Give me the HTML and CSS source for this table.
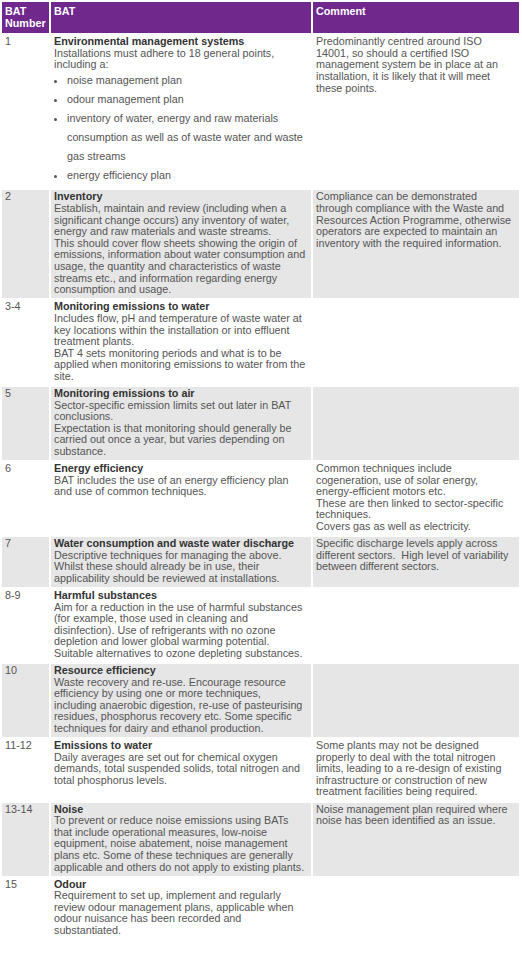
FILE: index.html
```html
<!DOCTYPE html>
<html lang="en">
<head>
<meta charset="utf-8">
<title>BAT conclusions</title>
<link rel="stylesheet" href="styles.css">
</head>
<body>
<table class="bat-table">
  <colgroup>
    <col class="col-num">
    <col class="col-bat">
    <col class="col-comment">
  </colgroup>
  <thead>
    <tr>
      <th>BAT Number</th>
      <th>BAT</th>
      <th>Comment</th>
    </tr>
  </thead>
  <tbody>
    <tr>
      <td>1</td>
      <td class="bat">
        <strong class="title">Environmental management systems</strong><br>
        Installations must adhere to 18 general points, including a:
        <ul class="points">
          <li>noise management plan</li>
          <li>odour management plan</li>
          <li>inventory of water, energy and raw materials consumption as well as of waste water and waste gas streams</li>
          <li>energy efficiency plan</li>
        </ul>
      </td>
      <td class="comment">Predominantly centred around ISO 14001, so should a certified ISO management system be in place at an installation, it is likely that it will meet these points.</td>
    </tr>
    <tr class="alt">
      <td>2</td>
      <td class="bat">
        <strong class="title">Inventory</strong><br>
        Establish, maintain and review (including when a significant change occurs) any inventory of water, energy and raw materials and waste streams.<br>
        This should cover flow sheets showing the origin of emissions, information about water consumption and usage, the quantity and characteristics of waste streams etc., and information regarding energy consumption and usage.
      </td>
      <td class="comment">Compliance can be demonstrated through compliance with the Waste and Resources Action Programme, otherwise operators are expected to maintain an inventory with the required information.</td>
    </tr>
    <tr>
      <td>3-4</td>
      <td class="bat">
        <strong class="title">Monitoring emissions to water</strong><br>
        Includes flow, pH and temperature of waste water at key locations within the installation or into effluent treatment plants.<br>
        BAT 4 sets monitoring periods and what is to be applied when monitoring emissions to water from the site.
      </td>
      <td class="comment"></td>
    </tr>
    <tr class="alt">
      <td>5</td>
      <td class="bat">
        <strong class="title">Monitoring emissions to air</strong><br>
        Sector-specific emission limits set out later in BAT conclusions.<br>
        Expectation is that monitoring should generally be carried out once a year, but varies depending on substance.
      </td>
      <td class="comment"></td>
    </tr>
    <tr>
      <td>6</td>
      <td class="bat">
        <strong class="title">Energy efficiency</strong><br>
        BAT includes the use of an energy efficiency plan and use of common techniques.
      </td>
      <td class="comment">Common techniques include cogeneration, use of solar energy, energy-efficient motors etc.<br>
        These are then linked to sector-specific techniques.<br>
        Covers gas as well as electricity.</td>
    </tr>
    <tr class="alt">
      <td>7</td>
      <td class="bat">
        <strong class="title">Water consumption and waste water discharge</strong><br>
        Descriptive techniques for managing the above. Whilst these should already be in use, their applicability should be reviewed at installations.
      </td>
      <td class="comment">Specific discharge levels apply across different sectors.&nbsp; High level of variability between different sectors.</td>
    </tr>
    <tr>
      <td>8-9</td>
      <td class="bat">
        <strong class="title">Harmful substances</strong><br>
        Aim for a reduction in the use of harmful substances (for example, those used in cleaning and disinfection). Use of refrigerants with no ozone depletion and lower global warming potential.<br>
        Suitable alternatives to ozone depleting substances.
      </td>
      <td class="comment"></td>
    </tr>
    <tr class="alt">
      <td>10</td>
      <td class="bat">
        <strong class="title">Resource efficiency</strong><br>
        Waste recovery and re-use. Encourage resource efficiency by using one or more techniques, including anaerobic digestion, re-use of pasteurising residues, phosphorus recovery etc. Some specific techniques for dairy and ethanol production.
      </td>
      <td class="comment"></td>
    </tr>
    <tr>
      <td>11-12</td>
      <td class="bat">
        <strong class="title">Emissions to water</strong><br>
        Daily averages are set out for chemical oxygen demands, total suspended solids, total nitrogen and total phosphorus levels.
      </td>
      <td class="comment">Some plants may not be designed properly to deal with the total nitrogen limits, leading to a re-design of existing infrastructure or construction of new treatment facilities being required.</td>
    </tr>
    <tr class="alt">
      <td>13-14</td>
      <td class="bat">
        <strong class="title">Noise</strong><br>
        To prevent or reduce noise emissions using BATs that include operational measures, low-noise equipment, noise abatement, noise management plans etc. Some of these techniques are generally applicable and others do not apply to existing plants.
      </td>
      <td class="comment">Noise management plan required where noise has been identified as an issue.</td>
    </tr>
    <tr>
      <td>15</td>
      <td class="bat">
        <strong class="title">Odour</strong><br>
        Requirement to set up, implement and regularly review odour management plans, applicable when odour nuisance has been recorded and substantiated.
      </td>
      <td class="comment"></td>
    </tr>
  </tbody>
</table>
</body>
</html>
```

FILE: styles.css
```css
html, body {
  margin: 0;
  padding: 0;
  background: #ffffff;
}

body {
  font-family: "Liberation Sans", Arial, sans-serif;
  font-size: 10.78px;
  line-height: 11.6px;
  color: #555555;
}

.bat-table {
  width: 521px;
  border-collapse: separate;
  border-spacing: 2px;
  table-layout: fixed;
}

.col-num { width: 47px; }
.col-bat { width: 260px; }
.col-comment { width: auto; }

.bat-table th {
  background: #70288d;
  color: #ffffff;
  font-weight: bold;
  text-align: left;
  vertical-align: top;
  padding: 4px 3px 4px 3px;
}

.bat-table td {
  vertical-align: top;
  text-align: left;
  padding: 1px 3px 2.5px 3px;
}

.bat-table td.bat {
  padding-right: 5.2px;
}

.bat-table td.comment {
  padding-right: 5.5px;
}

.bat-table tr.alt td {
  background: #e6e6e6;
}

.title {
  font-weight: bold;
  color: #333333;
}

.points {
  margin: 0 0 1px 0;
  padding-left: 13px;
  line-height: 19px;
}

.points li {
  list-style: disc;
}
```
